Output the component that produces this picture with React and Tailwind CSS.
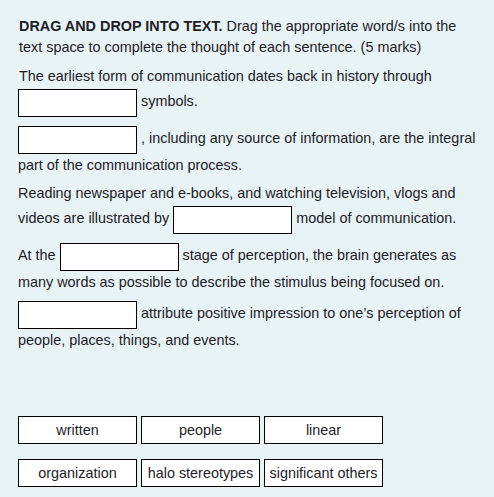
// Drag and drop into text — question card with blanks and a word bank

const BLANK = 'inline-block align-middle w-[119px] h-[28px] my-[1.5px] border border-black bg-white'

function Blank({ className = '' }) {
  return <span className={`${BLANK} ${className}`} />
}

const WORDS = [
  ['written', 'people', 'linear'],
  ['organization', 'halo stereotypes', 'significant others'],
]

export default function App() {
  return (
    <div
      className="w-[494px] h-[497px] bg-[#e7f3f5] text-[#1d2125] text-[14.4px] leading-[21px] pl-[18px] pr-[12px] pt-[16px]"
      style={{ fontFamily: '"Liberation Sans", Arial, sans-serif' }}
    >
      {/* Instructions */}
      <p className="mb-[8px] pl-px">
        <b>DRAG AND DROP INTO TEXT.</b> Drag the appropriate word/s into the text space to complete the
        thought of each sentence. (5 marks)
      </p>

      {/* Sentences with blanks */}
      <p className="mb-[6px]">
        <span className="pl-px">The earliest form of communication dates back in history through</span>{' '}
        <Blank /> symbols.
      </p>
      <p className="mb-[7px]">
        <Blank /> , including any source of information, are the integral part of the communication
        process.
      </p>
      <p className="mb-[6px]">
        Reading newspaper and e-books, and watching television, vlogs and videos are illustrated by{' '}
        <Blank /> model of communication.
      </p>
      <p className="mb-[6px]">
        At the <Blank /> stage of perception, the brain generates as many words as possible to describe
        the stimulus being focused on.
      </p>
      <p>
        <Blank /> attribute positive impression to one’s perception of people, places, things, and
        events.
      </p>

      {/* Word bank */}
      <div className="mt-[65px] flex flex-col gap-[15px]">
        {WORDS.map((row, i) => (
          <div key={i} className="flex gap-[4px]">
            {row.map(w => (
              <div
                key={w}
                className="w-[119px] h-[28px] border border-black bg-white flex items-center justify-center whitespace-nowrap"
              >
                {w}
              </div>
            ))}
          </div>
        ))}
      </div>
    </div>
  )
}
